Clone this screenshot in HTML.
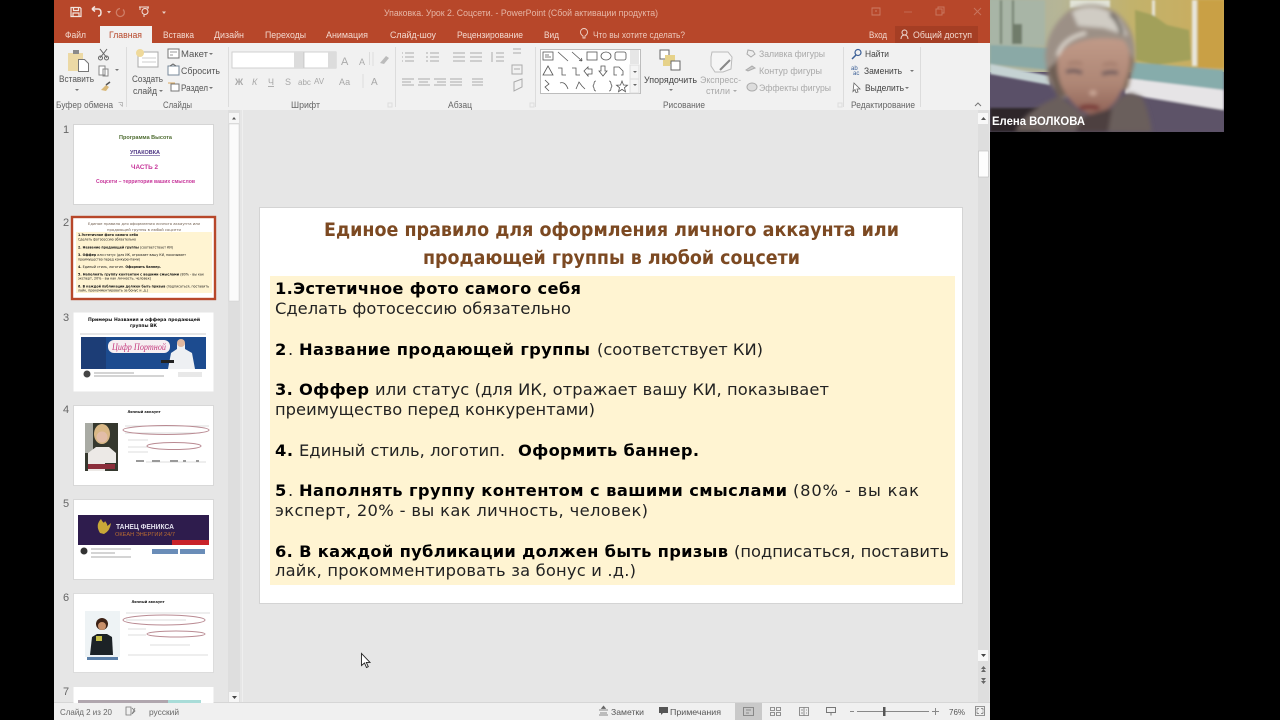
<!DOCTYPE html>
<html lang="ru"><head><meta charset="utf-8"><title>PowerPoint</title>
<style>
html,body{margin:0;padding:0;background:#000;width:1280px;height:720px;overflow:hidden}
svg{display:block;position:absolute;left:0;top:0}
text{font-family:"Liberation Sans","DejaVu Sans",sans-serif}
.r{font-size:9px;fill:#555}
.g{font-size:9px;fill:#a9a9a9}
.t{font-size:9px;fill:#f3d9cf}
.l{font-size:9px;fill:#666}
.s{font-family:"DejaVu Sans",sans-serif;font-size:16.3px;fill:#222}
.sb{font-family:"DejaVu Sans",sans-serif;font-size:16.3px;fill:#000;font-weight:bold}
.n{font-size:11px;fill:#666}
.th{font-family:"DejaVu Sans",sans-serif;font-size:3.5px;fill:#111}
.ic{fill:none;stroke:#666;stroke-width:1}
.ig{fill:none;stroke:#aaa;stroke-width:1}
.sh{fill:none;stroke:#555;stroke-width:.8}
</style></head><body>
<svg width="1280" height="720" viewBox="0 0 1280 720" xmlns="http://www.w3.org/2000/svg">
<defs>
<filter id="b1" x="-5%" y="-5%" width="110%" height="110%"><feGaussianBlur stdDeviation=".35"/></filter>
<filter id="b2" x="-5%" y="-5%" width="110%" height="110%"><feGaussianBlur stdDeviation=".25"/></filter>
<filter id="b3" x="-20%" y="-20%" width="140%" height="140%"><feGaussianBlur stdDeviation="2"/></filter>
<filter id="b4" x="-20%" y="-20%" width="140%" height="140%"><feGaussianBlur stdDeviation="1"/></filter>
<clipPath id="vc"><rect x="990" y="0" width="234" height="132"/></clipPath>
<linearGradient id="sky" x1="0" x2="1" y1="0" y2="0"><stop offset="0" stop-color="#a8b2a0"/><stop offset=".3" stop-color="#b6b596"/><stop offset=".6" stop-color="#c2b26c"/><stop offset="1" stop-color="#cbac5c"/></linearGradient>
<linearGradient id="skin" x1="0" x2="0" y1="0" y2="1"><stop offset="0" stop-color="#c09a88"/><stop offset=".6" stop-color="#ae8675"/><stop offset="1" stop-color="#8f6156"/></linearGradient>
</defs>
<rect width="1280" height="720" fill="#000"/>

<!-- window chrome -->
<rect x="54" y="0" width="936" height="43" fill="#b7472a"/>
<rect x="54" y="43" width="936" height="67" fill="#f1f1f1"/>
<rect x="54" y="110" width="936" height="592" fill="#e6e6e6"/>
<rect x="54" y="702" width="936" height="18" fill="#f0f0f0"/>
<rect x="54" y="702" width="936" height="1" fill="#d6d6d6"/>
<rect x="100" y="26" width="52" height="18" fill="#f1f1f1"/>
<rect x="895" y="26" width="83" height="17" fill="#a53e24"/>

<g filter="url(#b1)">
<!-- QAT -->
<g fill="none" stroke="#f2e4de" stroke-width="1.2">
<path d="M71 7.500h9l1 1v8h-10zM73.500 7.500v3h5v-3M73 16.500v-3.500h6v3.500"/>
<path d="M92 9l3 -2.500M92 9l3 2.500M92 9h6q3 0 3 3.500t-3 3.500" stroke-width="1.500"/>
<path d="M120 8.500a4 4 0 1 0 3 1" stroke="#cf7f68"/>
<path d="M139 7h10M140 7v3M148 7v2M144 17v-2" stroke-width="1"/>
<circle cx="145" cy="11.500" r="3" stroke-width="1"/>
</g>
<path d="M107 11h4l-2 2.500zM162 11.500h4l-2 2.500z" fill="#e8cfc6"/>
<path d="M872 8h8v7h-8zM875 11h2M874 15h4" fill="none" stroke="#cd7c65" stroke-width=".9"/>
<path d="M904 12h8" stroke="#c36b53"/>
<path d="M936 9h6v6h-6zM938 9v-2h6v6h-2" fill="none" stroke="#c8745d"/>
<path d="M974 8l7 7M981 8l-7 7" stroke="#c8745d"/>

<text x="384" y="16" class="t" style="fill:#e6b6a6" textLength="274" lengthAdjust="spacingAndGlyphs">Упаковка. Урок 2. Соцсети. - PowerPoint (Сбой активации продукта)</text>
<text x="65" y="38" textLength="21" lengthAdjust="spacingAndGlyphs" class="t">Файл</text>
<text x="109" y="38" textLength="33" lengthAdjust="spacingAndGlyphs" style="font-size:9px;fill:#b7472a">Главная</text>
<text x="163" y="38" textLength="31" lengthAdjust="spacingAndGlyphs" class="t">Вставка</text>
<text x="214" y="38" textLength="30" lengthAdjust="spacingAndGlyphs" class="t">Дизайн</text>
<text x="265" y="38" textLength="41" lengthAdjust="spacingAndGlyphs" class="t">Переходы</text>
<text x="326" y="38" textLength="42" lengthAdjust="spacingAndGlyphs" class="t">Анимация</text>
<text x="390" y="38" textLength="46" lengthAdjust="spacingAndGlyphs" class="t">Слайд-шоу</text>
<text x="457" y="38" textLength="66" lengthAdjust="spacingAndGlyphs" class="t">Рецензирование</text>
<text x="544" y="38" textLength="15" lengthAdjust="spacingAndGlyphs" class="t">Вид</text>
<text x="593" y="38" textLength="92" lengthAdjust="spacingAndGlyphs" style="font-size:9px;fill:#edc9bc">Что вы хотите сделать?</text>
<text x="869" y="38" textLength="18" lengthAdjust="spacingAndGlyphs" class="t">Вход</text>
<text x="913" y="38" textLength="59" lengthAdjust="spacingAndGlyphs" class="t">Общий доступ</text>
<path d="M583 36q-2.500-1.500-2.500-4a3.500 3.500 0 0 1 7 0q0 2.500-2.500 4v2h-2z" fill="none" stroke="#f0d4c9" stroke-width=".9"/>
<path d="M901 39c0-3 2-4 3.500-4s3.500 1 3.500 4M904.500 35a2.500 2.500 0 1 1 0-5 2.500 2.500 0 0 1 0 5z" fill="none" stroke="#f2e0d9"/>

<!-- ribbon groups -->
<g stroke="#dcdcdc"><path d="M126.500 47v60M228.500 47v60M395.500 47v60M535.500 47v60M843.500 47v60M920.500 47v60M369.500 52v13"/></g>

<!-- clipboard -->
<rect x="68" y="53" width="15" height="18" fill="#ecd9a5"/><rect x="73" y="50" width="6" height="4" fill="#8a8a8a"/>
<path d="M78.500 59.500h6l4 4v8h-10z" fill="#fff" stroke="#777"/>
<path d="M100 49l7 9M107 49l-7 9" stroke="#666"/><circle cx="100.500" cy="58" r="2" class="ic"/><circle cx="106.500" cy="58" r="2" class="ic"/>
<path d="M99 66h6v9h-6zM103 69h5v7h-5z" fill="#fff" stroke="#888"/>
<path d="M115 69h4l-2 2z" fill="#777"/>
<path d="M101 90l5-5 3 2-3 4z" fill="#d9b878"/><path d="M106 85l4-3" stroke="#555" stroke-width="1.500"/>
<text x="59" y="82" class="r" textLength="35" lengthAdjust="spacingAndGlyphs">Вставить</text>
<path d="M75 89h4l-2 2z" fill="#777"/>
<text x="56" y="108" class="l" textLength="57" lengthAdjust="spacingAndGlyphs">Буфер обмена</text>
<path d="M118.500 102.500h4v4M120 104l2.500 2.500" fill="none" stroke="#aaa" stroke-width=".7"/>

<!-- slides -->
<rect x="138" y="52" width="20" height="15" fill="#fff" stroke="#aaa"/><path d="M142 58h14M142 62h14" stroke="#ccc"/>
<circle cx="140" cy="53" r="4" fill="#efd99a"/>
<text x="132" y="82" class="r" textLength="31" lengthAdjust="spacingAndGlyphs">Создать</text>
<text x="133" y="94" class="r" textLength="24" lengthAdjust="spacingAndGlyphs">слайд</text>
<path d="M159 90h4l-2 2z" fill="#777"/>
<rect x="168" y="49" width="11" height="9" fill="#fff" stroke="#777"/><path d="M170 52h7M170 55h3" stroke="#999"/>
<text x="181" y="57" class="r" textLength="27" lengthAdjust="spacingAndGlyphs">Макет</text><path d="M209 53h4l-2 2z" fill="#777"/>
<rect x="168" y="66" width="11" height="9" fill="#fff" stroke="#789"/><path d="M170 66l3-2 3 2" class="ic"/>
<text x="181" y="74" class="r" textLength="39" lengthAdjust="spacingAndGlyphs">Сбросить</text>
<rect x="171" y="84" width="8" height="7" fill="#fff" stroke="#777"/><path d="M168 83h7" stroke="#d9a860"/>
<text x="181" y="91" class="r" textLength="27" lengthAdjust="spacingAndGlyphs">Раздел</text><path d="M209 87h4l-2 2z" fill="#777"/>
<text x="163" y="108" class="l" textLength="29" lengthAdjust="spacingAndGlyphs">Слайды</text>

<!-- font -->
<rect x="232" y="52" width="71" height="16" fill="#fff" stroke="#d0d0d0"/><rect x="294" y="52" width="9" height="16" fill="#dcdcdc"/>
<rect x="304" y="52" width="32" height="16" fill="#fff" stroke="#d0d0d0"/><rect x="328" y="52" width="8" height="16" fill="#dcdcdc"/>
<text x="341" y="65" style="font-size:11px;fill:#aaa">A</text><text x="359" y="65" style="font-size:9px;fill:#aaa">A</text>
<path d="M373 52v14" stroke="#ddd"/>
<path d="M380 63l6-7 3 2-5 6z" fill="#bbb"/>
<text x="235" y="85" style="font-size:9px;fill:#a8a8a8;font-weight:bold">Ж</text>
<text x="252" y="85" style="font-size:9px;fill:#a8a8a8;font-style:italic">К</text>
<text x="268" y="85" style="font-size:9px;fill:#a8a8a8;text-decoration:underline">Ч</text>
<text x="285" y="85" style="font-size:9px;fill:#a8a8a8">S</text>
<text x="298" y="85" style="font-size:8px;fill:#a8a8a8">abc</text>
<text x="314" y="84" style="font-size:8px;fill:#a8a8a8">AV</text>
<text x="339" y="85" style="font-size:9px;fill:#a8a8a8">Аа</text>
<text x="371" y="85" style="font-size:10px;fill:#a8a8a8">А</text>
<path d="M363 74v14" stroke="#ddd"/>
<text x="291" y="108" class="l" textLength="29" lengthAdjust="spacingAndGlyphs">Шрифт</text>
<path d="M388 103h4v4h-4z" stroke="#ddd" fill="none"/>

<!-- paragraph -->
<g class="ig" stroke="#b5b5b5">
<path d="M405 53h9M405 57h9M405 61h9M402 53h1M402 57h1M402 61h1M430 53h9M430 57h9M430 61h9M426 53h2M426 57h2M426 61h2"/>
<path d="M453 53h12M453 57h12M453 61h12M470 53h12M470 57h12M470 61h12M496 53h8M496 57h8M496 61h8M492 52v10"/>
<path d="M402 79h12M402 82h9M402 85h12M418 79h12M419 82h9M418 85h12M434 79h12M437 82h9M434 85h12M450 79h12M450 82h12M450 85h12M472 79h11M472 82h11M472 85h11"/>
<path d="M513 49h8M513 53h8M512 65h10v9h-10zM514 69h6M514 82l8-3v8l-8 4z"/>
</g>
<text x="448" y="108" class="l" textLength="24" lengthAdjust="spacingAndGlyphs">Абзац</text>
<path d="M530 103h4v4h-4z" stroke="#ddd" fill="none"/>

<!-- shapes gallery -->
<rect x="540.500" y="49.500" width="100" height="44" fill="#fff" stroke="#bdbdbd"/>
<rect x="630" y="50" width="9" height="14" fill="#e6e6e6"/><rect x="630" y="65" width="9" height="14" fill="#f4f4f4" stroke="#ddd"/><rect x="630" y="79" width="9" height="14" fill="#f4f4f4" stroke="#ddd"/>
<path d="M633 71h4l-2 2zM633 84h4l-2 2z" fill="#666"/>
<g class="sh">
<rect x="543" y="52" width="10" height="8"/><path d="M545 55h4M545 57h6"/>
<path d="M558 52l10 9M572 52l10 9M582 61l-3-.500M582 61l-.500-3"/>
<rect x="587" y="52" width="10" height="8"/><ellipse cx="606" cy="56" rx="5" ry="4"/><rect x="615" y="52" width="11" height="8" rx="2"/>
<path d="M548 66l-5 9h10zM558 68h4v7h4M572 68h4v7h4M584 71l4-4v2h4v5h-4v2z" />
<path d="M601 66h4v5h2l-4 5-4-5h2zM617 75h-3v-8h5l4 4v4h-2"/>
<path d="M545 80l4 4-4 3 4 4M560 83q5-2 8 6M576 89l3-7 3 4 3 3M596 81q-2 0-2 3l-1 2 1 2q0 3 2 3M609 81q2 0 2 3l1 2-1 2q0 3-2 3"/>
<path d="M622 81l1.500 4 4 .200-3 2.500 1 4-3.500-2.300-3.500 2.300 1-4-3-2.500 4-.200z"/>
</g>

<!-- drawing -->
<rect x="660" y="50" width="9" height="9" fill="#fff" stroke="#666"/><rect x="665" y="55" width="10" height="9" fill="#e6d28a"/><rect x="671" y="61" width="9" height="9" fill="#fff" stroke="#666"/><rect x="663" y="60" width="7" height="6" fill="#e6d28a"/>
<text x="644" y="83" style="font-size:9px;fill:#444" textLength="53" lengthAdjust="spacingAndGlyphs">Упорядочить</text>
<path d="M669 89h4l-2 2z" fill="#777"/>
<path d="M712 52h16l4 5-1 12-8 3h-8l-4-6v-9z" fill="#f5f5f5" stroke="#bbb"/><path d="M720 70l10-10" stroke="#888" stroke-width="2"/>
<text x="700" y="83" class="g" textLength="41" lengthAdjust="spacingAndGlyphs">Экспресс-</text>
<text x="706" y="94" class="g" textLength="24" lengthAdjust="spacingAndGlyphs">стили</text>
<path d="M733 90h4l-2 2z" fill="#aaa"/>
<path d="M748 50l5 1 2 3-4 3-4-3z" fill="#eee" stroke="#aaa"/>
<path d="M746 70l6-4 3 2-7 3z" fill="#ccc" stroke="#aaa"/>
<ellipse cx="752" cy="87" rx="5" ry="4" fill="#ddd" stroke="#aaa"/>
<text x="759" y="57" class="g" textLength="66" lengthAdjust="spacingAndGlyphs">Заливка фигуры</text>
<text x="759" y="74" class="g" textLength="63" lengthAdjust="spacingAndGlyphs">Контур фигуры</text>
<text x="759" y="91" class="g" textLength="72" lengthAdjust="spacingAndGlyphs">Эффекты фигуры</text>
<text x="663" y="108" class="l" textLength="42" lengthAdjust="spacingAndGlyphs">Рисование</text>
<path d="M838 103h4v4h-4z" stroke="#ddd" fill="none"/>

<!-- editing -->
<circle cx="858" cy="52.500" r="3" fill="none" stroke="#3b5f96" stroke-width="1.200"/><path d="M856 55l-4 4" stroke="#3b5f96" stroke-width="1.500"/>
<text x="865" y="57" style="font-size:9px;fill:#444" textLength="24" lengthAdjust="spacingAndGlyphs">Найти</text>
<text x="851" y="70" style="font-size:6px;fill:#3b5f96">ab</text><text x="853" y="75" style="font-size:6px;fill:#3b5f96">ac</text>
<text x="864" y="74" style="font-size:9px;fill:#444" textLength="38" lengthAdjust="spacingAndGlyphs">Заменить</text><path d="M910 70h4l-2 2z" fill="#777"/>
<path d="M854 83l6 6-3 0 1 3-2 .500-1-3-2 2z" fill="#fff" stroke="#666" stroke-width=".8"/>
<text x="865" y="91" style="font-size:9px;fill:#444" textLength="39" lengthAdjust="spacingAndGlyphs">Выделить</text><path d="M905 87h4l-2 2z" fill="#777"/>
<text x="851" y="108" class="l" textLength="64" lengthAdjust="spacingAndGlyphs">Редактирование</text>
<path d="M975 106l3-3 3 3" fill="none" stroke="#777"/>
</g>

<!-- thumbnails pane -->
<rect x="228" y="110" width="12" height="592" fill="#dedede"/>
<rect x="229" y="124" width="10" height="177" fill="#fbfbfb" stroke="#cfcfcf" stroke-width=".5"/>
<rect x="229" y="113" width="10" height="10" fill="#f6f6f6"/><path d="M232 119.500h4l-2-2.500z" fill="#555"/>
<rect x="229" y="692" width="10" height="10" fill="#f6f6f6"/><path d="M232 696h5l-2.500 3z" fill="#444"/>
<rect x="242" y="110" width="1" height="592" fill="#efefef"/>

<g filter="url(#b2)">
<text x="63" y="133" class="n">1</text><text x="63" y="226" class="n">2</text><text x="63" y="321" class="n">3</text><text x="63" y="413" class="n">4</text><text x="63" y="507" class="n">5</text><text x="63" y="601" class="n">6</text><text x="63" y="695" class="n">7</text>
</g>

<g filter="url(#b2)">
<!-- thumb 1 -->
<rect x="73.500" y="124.500" width="140" height="80" fill="#fff" stroke="#d5d5d5"/>
<text x="119" y="139" style="font-size:5.500px;fill:#4f6d32;font-weight:bold" textLength="53" lengthAdjust="spacingAndGlyphs">Программа Высота</text>
<text x="130" y="154" style="font-size:5.500px;fill:#4b3382;text-decoration:underline;font-weight:bold" textLength="30" lengthAdjust="spacingAndGlyphs">УПАКОВКА</text>
<text x="131" y="169" style="font-size:6.500px;fill:#c7359a;font-weight:bold" textLength="27" lengthAdjust="spacingAndGlyphs">ЧАСТЬ 2</text>
<text x="96" y="183" style="font-size:5.500px;fill:#c7359a;font-weight:bold" textLength="99" lengthAdjust="spacingAndGlyphs">Соцсети – территория ваших смыслов</text>
<!-- thumb 2 -->
<rect x="72" y="217" width="143" height="82" fill="#fff" stroke="#b7472a" stroke-width="2.400"/>
<rect x="76" y="232" width="136" height="61" fill="#fff4d2"/>
<text x="88" y="225" class="th" style="fill:#6d5a4a" textLength="112" lengthAdjust="spacingAndGlyphs">Единое правило для оформления личного аккаунта или</text>
<text x="107" y="231" class="th" style="fill:#6d5a4a" textLength="74" lengthAdjust="spacingAndGlyphs">продающей группы в любой соцсети</text>
<text x="78" y="236" class="th" font-weight="bold" textLength="60" lengthAdjust="spacingAndGlyphs">1.Эстетичное фото самого себя</text>
<text x="78" y="240.500" class="th" textLength="58" lengthAdjust="spacingAndGlyphs">Сделать фотосессию обязательно</text>
<text x="78" y="248.500" class="th" font-weight="bold" textLength="95" lengthAdjust="spacingAndGlyphs">2. Название продающей группы <tspan font-weight="normal">(соответствует КИ)</tspan></text>
<text x="78" y="256" class="th" font-weight="bold" textLength="108" lengthAdjust="spacingAndGlyphs">3. Оффер <tspan font-weight="normal">или статус (для ИК, отражает вашу КИ, показывает</tspan></text>
<text x="78" y="260.500" class="th" textLength="62" lengthAdjust="spacingAndGlyphs">преимущество перед конкурентами)</text>
<text x="78" y="268" class="th" font-weight="bold" textLength="83" lengthAdjust="spacingAndGlyphs">4. <tspan font-weight="normal">Единый стиль, логотип.</tspan> Оформить баннер.</text>
<text x="78" y="275.500" class="th" font-weight="bold" textLength="126" lengthAdjust="spacingAndGlyphs">5. Наполнять группу контентом с вашими смыслами <tspan font-weight="normal">(80% - вы как</tspan></text>
<text x="78" y="279.500" class="th" textLength="73" lengthAdjust="spacingAndGlyphs">эксперт, 20% - вы как личность, человек)</text>
<text x="78" y="287.500" class="th" font-weight="bold" textLength="131" lengthAdjust="spacingAndGlyphs">6. В каждой публикации должен быть призыв <tspan font-weight="normal">(подписаться, поставить</tspan></text>
<text x="78" y="291.500" class="th" textLength="70" lengthAdjust="spacingAndGlyphs">лайк, прокомментировать за бонус и .д.)</text>
<!-- thumb 3 -->
<rect x="73.500" y="312.500" width="140" height="79" fill="#fff"/>
<text x="88" y="321" class="th" style="font-size:4.500px;font-weight:bold" textLength="112" lengthAdjust="spacingAndGlyphs">Примеры Названия и оффера продающей</text>
<text x="130" y="327" class="th" style="font-size:4.500px;font-weight:bold" textLength="27" lengthAdjust="spacingAndGlyphs">группы ВК</text>
<path d="M80 334h126" stroke="#ccc"/>
<rect x="81" y="337" width="125" height="32" fill="#1d4b8f"/>
<rect x="81" y="337" width="25" height="32" fill="#1a3e76"/>
<rect x="108" y="340" width="62" height="13" rx="6" fill="#f6eff2"/>
<text x="112" y="350" style="font-size:9px;fill:#c43b7e;font-family:'Liberation Serif',serif;font-style:italic" textLength="54" lengthAdjust="spacingAndGlyphs">Цифр Портной</text>
<path d="M168 369l3-16 6-4v-6l4-2 4 2v6l7 4 3 16z" fill="#eef0f3"/><circle cx="181" cy="343" r="4" fill="#e0b8a0"/>
<rect x="161" y="360" width="13" height="3" fill="#222"/>
<circle cx="87" cy="374" r="3.500" fill="#444"/>
<path d="M94 373h40M94 376h70" stroke="#aaa"/><rect x="178" y="372" width="24" height="5" fill="#e8e8e8"/>
<!-- thumb 4 -->
<rect x="73.500" y="405.500" width="140" height="80" fill="#fff" stroke="#d8d8d8"/>
<text x="144" y="413" class="th" text-anchor="middle" font-weight="bold">Личный аккаунт</text>
<rect x="85" y="423" width="33" height="48" fill="#35382f"/>
<rect x="85" y="423" width="8" height="30" fill="#a9aba4"/>
<path d="M88 471v-18l8-6h13l7 6v10H105v8z" fill="#ece9e6"/>
<ellipse cx="102" cy="434" rx="8" ry="10" fill="#d9b886"/>
<circle cx="102" cy="437" r="5.500" fill="#e2bda8"/><rect x="88" y="464" width="27" height="5" fill="#8b2d3a"/>
<path d="M125 426h84M125 433h70M128 440h20M128 447h20M128 452h20M146 462h60" stroke="#ddd"/>
<ellipse cx="166" cy="430" rx="43" ry="4.500" fill="none" stroke="#b98a92"/><ellipse cx="174" cy="446" rx="27" ry="3.500" fill="none" stroke="#b98a92"/>
<path d="M136 461h8M152 461h8M170 461h8M183 461h3M196 461h3" stroke="#999" stroke-width="2"/>
<!-- thumb 5 -->
<rect x="73.500" y="499.500" width="140" height="80" fill="#fff" stroke="#d8d8d8"/>
<rect x="78" y="515" width="131" height="30" fill="#2e1f4e"/>
<rect x="172" y="540" width="37" height="5" fill="#c8202c"/>
<path d="M100 533q-5-8 1-14 3 6 4 2 3 4 2 5 2-1 4-3-1 8-7 11z" fill="#c8a838"/>
<text x="116" y="529" style="font-size:7px;fill:#e4e0ee;font-weight:bold" textLength="58" lengthAdjust="spacingAndGlyphs">ТАНЕЦ ФЕНИКСА</text>
<text x="115" y="536" style="font-size:5px;fill:#b86a30" textLength="60" lengthAdjust="spacingAndGlyphs">ОКЕАН ЭНЕРГИИ 24/7</text>
<circle cx="84" cy="551" r="3.500" fill="#333"/>
<path d="M91 549h40M91 553h24M91 557h40" stroke="#aaa"/>
<rect x="152" y="549" width="26" height="5" fill="#6a8db8"/><rect x="180" y="549" width="25" height="5" fill="#6a8db8"/>
<!-- thumb 6 -->
<rect x="73.500" y="593.500" width="140" height="79" fill="#fff" stroke="#dcdcdc"/>
<text x="148" y="603" class="th" text-anchor="middle" font-weight="bold">Личный аккаунт</text>
<rect x="85" y="611" width="35" height="46" fill="#eef3f5"/>
<path d="M90 655l2-18 5-3h10l5 3 1 18z" fill="#1d2126"/>
<circle cx="102" cy="624" r="6" fill="#3d2414"/><circle cx="102" cy="626" r="4" fill="#c9906a"/><rect x="96" y="636" width="6" height="5" fill="#c8c04a"/>
<rect x="87" y="657" width="31" height="3" fill="#5a7fa8"/>
<path d="M126 613h84M126 620h60M128 629h18M128 635h18M150 645h40M128 655h80" stroke="#ddd"/>
<ellipse cx="164" cy="620" rx="41" ry="5" fill="none" stroke="#b98a92"/><ellipse cx="176" cy="634" rx="29" ry="3" fill="none" stroke="#b98a92"/>
<!-- thumb 7 -->
<rect x="73.500" y="687" width="140" height="16" fill="#fff"/>
<rect x="78" y="700" width="90" height="3" fill="#b0a6ae"/><rect x="168" y="700" width="33" height="3" fill="#a8dcd8"/>
</g>

<!-- main slide -->
<rect x="259.500" y="207.500" width="703" height="396" fill="#fff" stroke="#d4d4d4"/>
<rect x="270" y="276" width="685" height="309" fill="#fff4d2"/>
<g filter="url(#b2)">
<text x="324" y="236" style="font-family:'DejaVu Sans',sans-serif;font-size:19px;font-weight:bold;fill:#7b4a20" textLength="575" lengthAdjust="spacingAndGlyphs">Единое правило для оформления личного аккаунта или</text>
<text x="423" y="264" style="font-family:'DejaVu Sans',sans-serif;font-size:19px;font-weight:bold;fill:#7b4a20" textLength="377" lengthAdjust="spacingAndGlyphs">продающей группы в любой соцсети</text>
<text x="275" y="294" class="sb" textLength="306">1.Эстетичное фото самого себя</text>
<text x="275" y="314" class="s" textLength="296">Сделать фотосессию обязательно</text>
<text x="275" y="355" class="sb">2</text><text x="288" y="355" class="s">.</text>
<text x="299" y="355" class="sb" textLength="291">Название продающей группы</text>
<text x="597" y="355" class="s" textLength="166">(соответствует КИ)</text>
<text x="275" y="395" class="sb" textLength="94">3. Оффер</text>
<text x="375" y="395" class="s" textLength="454">или статус (для ИК, отражает вашу КИ, показывает</text>
<text x="275" y="415" class="s" textLength="320">преимущество перед конкурентами)</text>
<text x="275" y="456" class="sb" textLength="18">4.</text>
<text x="299" y="456" class="s" textLength="206">Единый стиль, логотип.</text>
<text x="518" y="456" class="sb" textLength="181">Оформить баннер.</text>
<text x="275" y="496" class="sb">5</text><text x="288" y="496" class="s">.</text>
<text x="299" y="496" class="sb" textLength="488">Наполнять группу контентом с вашими смыслами</text>
<text x="793" y="496" class="s" textLength="126">(80% - вы как</text>
<text x="275" y="516" class="s" textLength="373">эксперт, 20% - вы как личность, человек)</text>
<text x="275" y="557" class="sb" textLength="453">6. В каждой публикации должен быть призыв</text>
<text x="734" y="557" class="s" textLength="215">(подписаться, поставить</text>
<text x="275" y="576" class="s" textLength="361">лайк, прокомментировать за бонус и .д.)</text>
</g>

<!-- main scrollbar -->
<rect x="978" y="110" width="11" height="592" fill="#dedede"/>
<rect x="978" y="113" width="10" height="11" fill="#f8f8f8"/><path d="M981 120h5l-2.500-3z" fill="#555"/>
<rect x="978.500" y="151" width="10" height="26" fill="#fdfdfd" stroke="#bbb" stroke-width=".6"/>
<rect x="978" y="650" width="10" height="11" fill="#f8f8f8"/><path d="M981 654h5l-2.500 3z" fill="#444"/>
<path d="M981 669h5l-2.500-3zM981 672h5l-2.500-3M981 678h5l-2.500 3zM981 681h5l-2.500 3z" fill="#666"/>
<!-- cursor -->
<path d="M361.500 653.500v12l3-2.500 2 4.500 1.800-.800-2-4.300h3.700z" fill="#fff" stroke="#222" stroke-width=".9"/>

<!-- status bar -->
<g filter="url(#b1)">
<text x="60" y="715" class="l" style="font-size:8.500px" textLength="52" lengthAdjust="spacingAndGlyphs">Слайд 2 из 20</text>
<path d="M126 707h5v8h-5zM132 708l3 3-3 3M135 708l-3 6" fill="none" stroke="#777" stroke-width=".8"/>
<text x="149" y="715" class="l" style="font-size:8.500px" textLength="30" lengthAdjust="spacingAndGlyphs">русский</text>
<path d="M599 710h9M600 713h7M599 715h9M603.500 706l2 2.500h-4z" stroke="#666" fill="#666" stroke-width=".7"/>
<text x="611" y="715" class="l" style="font-size:8.500px;fill:#555" textLength="33" lengthAdjust="spacingAndGlyphs">Заметки</text>
<path d="M659 707h9v6h-5l-2 2v-2h-2z" fill="#555"/>
<text x="670" y="715" class="l" style="font-size:8.500px;fill:#555" textLength="51" lengthAdjust="spacingAndGlyphs">Примечания</text>
<rect x="735" y="703" width="27" height="17" fill="#c9c9c9"/>
<path d="M743.500 707.500h10v8h-10zM746 710h5M746 713h3" fill="none" stroke="#777" stroke-width=".8"/>
<path d="M770.500 707.500h4v3h-4zM776.500 707.500h4v3h-4zM770.500 712.500h4v3h-4zM776.500 712.500h4v3h-4zM799.500 707.500h9v8h-9zM804 707.500v8M801 710h2M801 713h2M806 710h1M806 713h1" fill="none" stroke="#777" stroke-width=".8"/>
<path d="M826.500 707.500h9v5h-9zM831 712.500v3" fill="none" stroke="#777" stroke-width="1"/>
<path d="M850 711.500h4M857 711.500h72M932 711.500h7M935.500 708v7" stroke="#888"/>
<rect x="883" y="707" width="2.500" height="9" fill="#555"/>
<text x="949" y="715" class="l" style="font-size:8.500px;fill:#555" textLength="16" lengthAdjust="spacingAndGlyphs">76%</text>
<path d="M975.500 706.500h9v9h-9zM977 708.500h2M977 708.500v2M983 708.500h-2M983 708.500v2M977 713.500h2M977 713.500v-2M983 713.500h-2M983 713.500v-2" fill="none" stroke="#777" stroke-width=".8"/>
</g>

<!-- video tile -->
<g clip-path="url(#vc)">
<rect x="990" y="0" width="234" height="132" fill="#5a5068"/>
<rect x="990" y="0" width="234" height="72" fill="url(#sky)"/>
<g filter="url(#b4)">
<path d="M990 0h55v46h-55z" fill="#a8b5a6"/>
<path d="M1000 0h2v44h-2zM1012 0h2v44h-2zM1014 24h8v20h-8z" fill="#6f7b6b"/>
<path d="M1070 0h40v8h-40z" fill="#e2e4d8"/>
<path d="M1152 0h3v55h-3zM1192 0h5v66h-5z" fill="#e8e6dc"/>
<path d="M1135 10l18 5 14 10 22 5 2 30-35 5-20-5z" fill="#a2a05a"/>
<path d="M1198 0h26v68h-26z" fill="#c9a044"/>
<path d="M990 45l60 3v22l-60-6z" fill="#8aa9a6"/>
<path d="M1130 62l94 8v20l-94-10z" fill="#86acab"/>
<path d="M990 64l60 12v9l-60-11z" fill="#c5d2d3"/>
<path d="M1125 78l99 12v20l-99-16z" fill="#e6e4e6"/>
<path d="M1126 96l98 14v22h-98z" fill="#5d5268"/>
<path d="M990 108h50v24h-50z" fill="#2d2729"/>
</g>
<g filter="url(#b3)">
<path d="M1045 57C1046 40 1052 26 1066 13 1078 3 1100 0 1118 14 1132 26 1138 45 1134 67L1126 90 1060 98 1048 80Z" fill="#9c9086"/>
<path d="M1047 70L1058 60 1068 95 1058 98Z" fill="#6e5f55"/>
<path d="M1126 48L1134 60 1128 88 1118 92Z" fill="#84705f"/>
<path d="M1072 12C1085 4 1105 5 1120 20L1128 36 1104 28 1078 26Z" fill="#d0ccc4"/>
<path d="M1110 14C1116 18 1120 26 1122 34" stroke="#6e6860" stroke-width="4" fill="none"/>
<path d="M1058 56C1060 44 1072 36 1086 33" stroke="#dcd5cc" stroke-width="3.500" fill="none"/>
<path d="M1058 58C1062 44 1090 34 1123 40 1131 48 1131 60 1128 72L1122 90C1116 104 1106 112 1097 115 1084 116 1072 104 1066 94 1059 84 1056 70 1058 58Z" fill="url(#skin)"/>
<path d="M1066 72q8-3 16 1M1102 74q8-3 16-1" stroke="#4d4450" stroke-width="3.500" fill="none" stroke-opacity=".8"/>
<path d="M1068 64q8-3 14 0M1103 65q8-3 14 0" stroke="#8a6558" stroke-width="2" fill="none" stroke-opacity=".7"/>
<ellipse cx="1093" cy="93" rx="3.500" ry="2.500" fill="#cfac9b"/>
<path d="M1080 108q9-3 19 0" stroke="#6f2226" stroke-width="4" fill="none" stroke-opacity=".85"/>
<path d="M1015 132C1022 115 1040 104 1060 96L1085 116 1112 108C1118 98 1125 93 1132 93L1142 97C1148 110 1150 120 1152 132Z" fill="#6b5e5c"/>
<path d="M1085 116L1112 108 1108 132H1075Z" fill="#4d3f40"/>
</g>
</g>
<text x="992" y="125" style="font-size:11.500px;font-weight:bold;fill:#fff" textLength="93" lengthAdjust="spacingAndGlyphs">Елена ВОЛКОВА</text>
</svg>
</body></html>
